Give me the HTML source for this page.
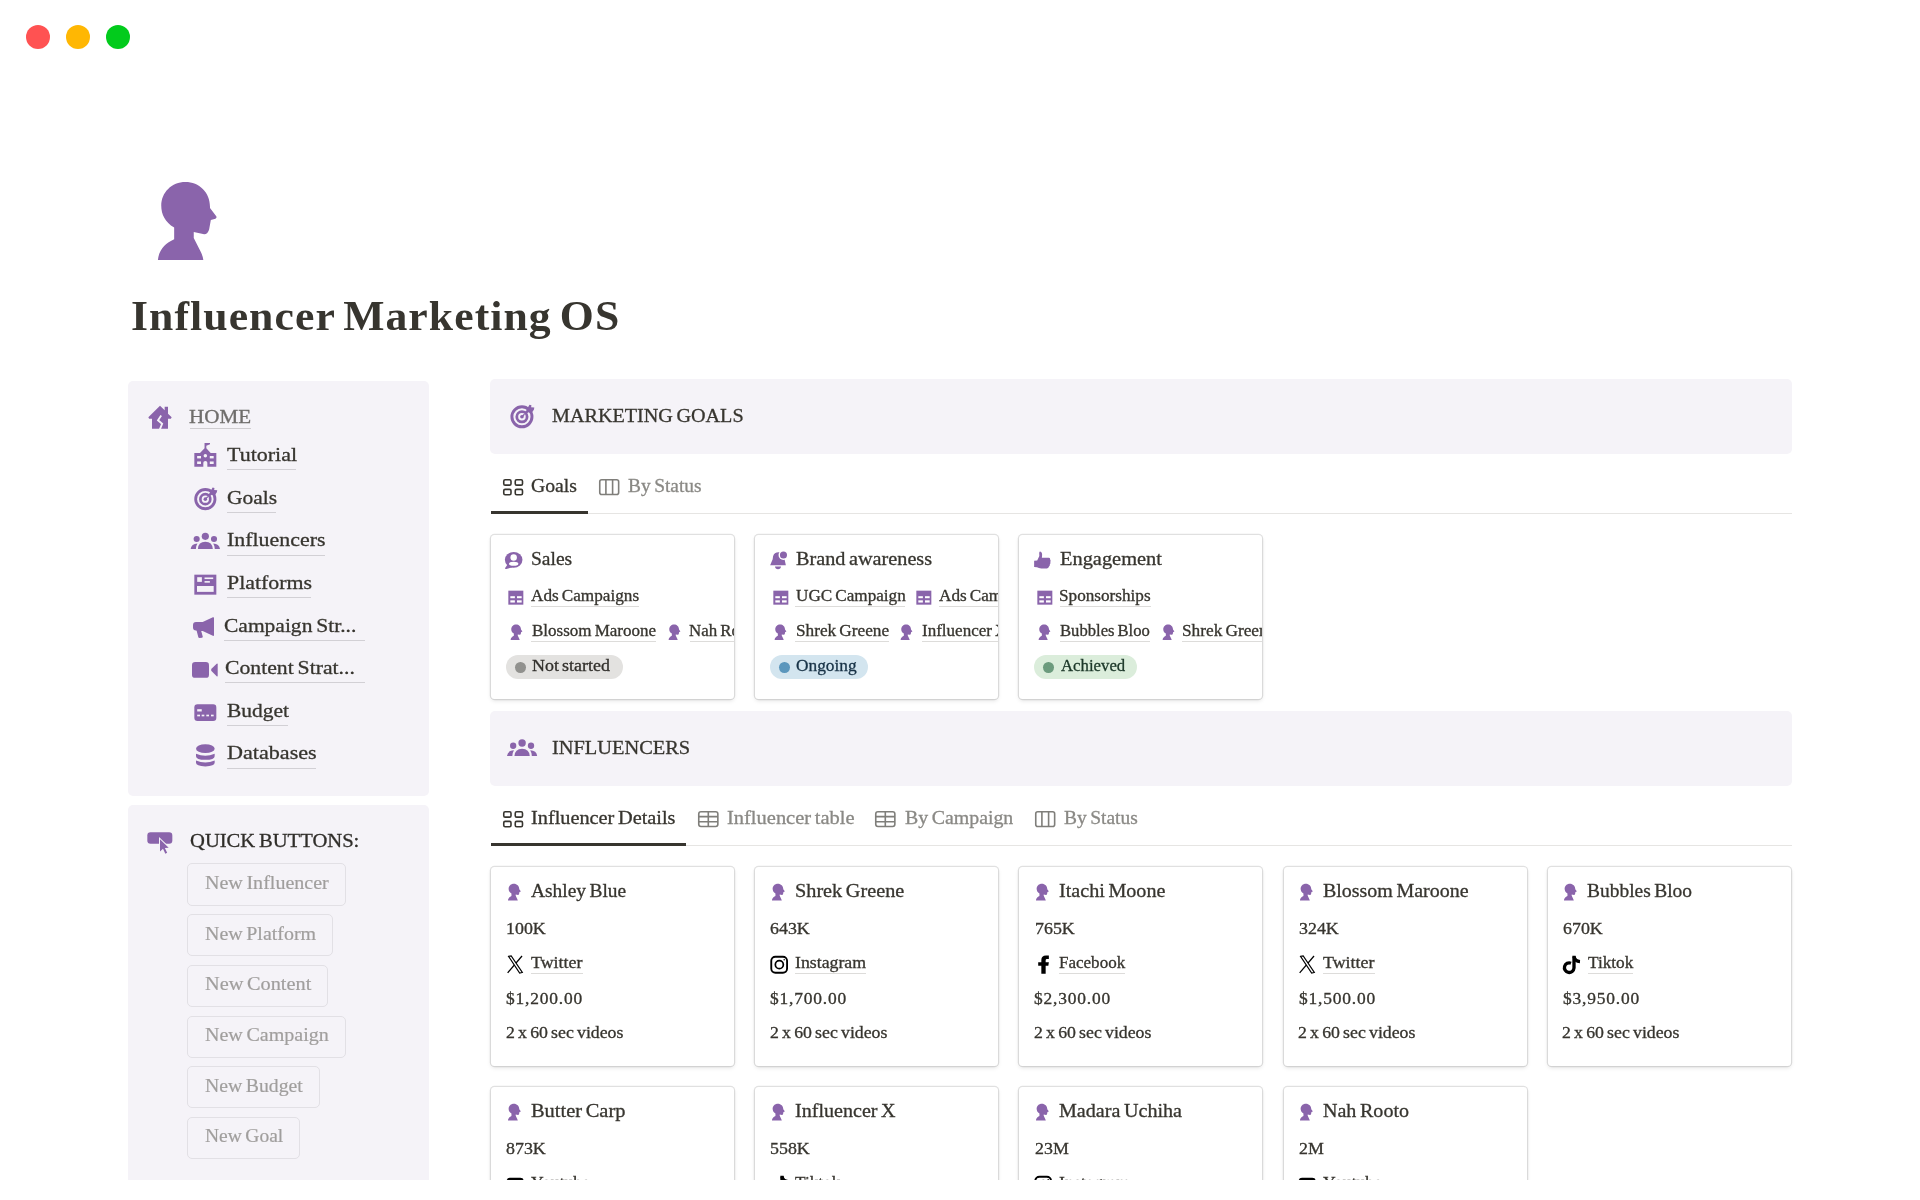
<!DOCTYPE html>
<html lang="en">
<head>
<meta charset="utf-8">
<title>Influencer Marketing OS</title>
<style>
*{box-sizing:border-box;margin:0;padding:0}
html,body{width:1920px;height:1200px;overflow:hidden;background:#fff}
body{font-family:"Liberation Serif",serif;color:#37352f;position:relative}
#view{position:absolute;left:0;top:0;width:1920px;height:1180px;overflow:hidden;will-change:transform}
.abs{position:absolute}
.dot{position:absolute;top:25px;width:24px;height:24px;border-radius:50%}
.t{position:absolute;white-space:nowrap;line-height:1;-webkit-text-stroke:0.3px;transform-origin:0 0;word-spacing:-0.07em}
svg{position:absolute;overflow:visible}
.panel{position:absolute;background:#f5f3f8;border-radius:5px}
.ul{position:absolute;height:1px}
.qb{position:absolute;height:42.2px;border:1px solid #e2e0e5;border-radius:5px}
.card{position:absolute;background:#fff;border-radius:3.5px;box-shadow:0 0 0 1.25px rgba(15,15,15,.12),0 2px 4px rgba(15,15,15,.1);overflow:hidden}
.pill{position:absolute;height:23.6px;border-radius:12px}
.pdot{position:absolute;width:10.8px;height:10.8px;border-radius:50%}
</style>
</head>
<body>

<div id="view">
<div class="dot" style="left:26px;background:#ff5252"></div><div class="dot" style="left:66px;background:#ffb703"></div><div class="dot" style="left:106px;background:#02cb1c"></div>
<svg style="left:140.10px;top:169.90px" width="100" height="100" viewBox="0 0 1200 1200"><path fill="#8a64ab" d="M215 1080C225 960 300 880 410 830L410 690C300 630 255 530 255 430C255 270 380 145 545 145C710 145 840 270 840 440L840 455L915 555Q925 575 905 585L850 600L830 710Q815 770 770 770L645 745L645 815L730 985Q755 1035 760 1080Z"/></svg>
<div class="panel" style="left:128px;top:381px;width:300.5px;height:415.3px"></div>
<div class="panel" style="left:128px;top:805px;width:300.5px;height:400px"></div>
<div class="panel" style="left:490.2px;top:379.0px;width:1301.6px;height:74.5px"></div>
<div class="panel" style="left:490.2px;top:711.2px;width:1301.6px;height:74.8px"></div>
<svg style="left:140.00px;top:396.00px" width="90.00" height="80.00" viewBox="0 0 1350 1200"><path fill="#8a64ab" d="M300 148L125 318L137 340L180 340L180 490L420 490L420 340L463 340L475 318L420 265L420 160L370 160L370 215Z"/><path fill="none" stroke="#f5f3f8" stroke-width="28" stroke-linejoin="miter" d="M318 292L270 365L332 418L298 500"/></svg>
<svg style="left:140.00px;top:396.00px" width="90.00" height="80.00" viewBox="0 0 1350 1200"><path fill="#8a64ab" d="M815 855L900 855L968 782L968 705L1050 705L1050 722L995 748L995 782L1060 855L1145 855L1145 1060L1010 1060L1010 1000Q1010 975 980 975Q950 975 950 1000L950 1060L815 1060Z"/><g fill="#f5f3f8"><rect x="857" y="900" width="58" height="36"/><rect x="1047" y="900" width="58" height="36"/><rect x="857" y="982" width="58" height="38"/><rect x="1047" y="982" width="58" height="38"/><circle cx="980" cy="895" r="26"/></g></svg>
<div class="ul" style="left:190.0px;top:428.0px;width:61.0px;background:#cfcdd0"></div>
<div class="ul" style="left:226.7px;top:469.4px;width:69.8px;background:#d2d0d5"></div>
<div class="ul" style="left:226.7px;top:511.9px;width:49.8px;background:#d2d0d5"></div>
<div class="ul" style="left:226.7px;top:554.5px;width:98.2px;background:#d2d0d5"></div>
<div class="ul" style="left:226.7px;top:597.2px;width:84.8px;background:#d2d0d5"></div>
<div class="ul" style="left:224.1px;top:639.9px;width:140.8px;background:#d2d0d5"></div>
<div class="ul" style="left:225.3px;top:682.4px;width:139.6px;background:#d2d0d5"></div>
<div class="ul" style="left:226.7px;top:725.0px;width:61.8px;background:#d2d0d5"></div>
<div class="ul" style="left:226.7px;top:767.6px;width:89.4px;background:#d2d0d5"></div>
<svg style="left:190.00px;top:483.00px" width="32.00" height="32.00" viewBox="0 0 1200 1200"><circle cx="575" cy="605" r="362" fill="none" stroke="#8a64ab" stroke-width="106"/><circle cx="575" cy="605" r="186" fill="none" stroke="#8a64ab" stroke-width="100"/><circle cx="575" cy="605" r="66" fill="#8a64ab"/><path d="M575 605L655 525" stroke="#8a64ab" stroke-width="46" stroke-linecap="round" fill="none"/><path d="M700 480L850 330" stroke="#8a64ab" stroke-width="96" fill="none"/><path fill="#8a64ab" d="M752 335L848 168L918 186L906 262L1022 274L1006 348L936 448L790 442Z"/></svg>
<svg style="left:180.00px;top:480.00px" width="90.00" height="80.00" viewBox="0 0 1350 1200"><g fill="#8a64ab"><circle cx="380" cy="845" r="54"/><circle cx="250" cy="885" r="46"/><circle cx="510" cy="885" r="46"/><path d="M268 1035Q275 930 380 928Q485 930 492 1035Z"/><path d="M160 1035Q170 955 262 952Q240 985 238 1035Z"/><path d="M600 1035Q590 955 498 952Q520 985 522 1035Z"/></g></svg>
<svg style="left:180.00px;top:560.00px" width="90.00" height="80.00" viewBox="0 0 1350 1200"><rect x="215" y="220" width="330" height="300" fill="#8a64ab"/><g fill="#f5f3f8"><rect x="258" y="258" width="70" height="70"/><rect x="368" y="262" width="130" height="24"/><rect x="368" y="316" width="80" height="24"/><rect x="255" y="390" width="250" height="88"/></g></svg>
<svg style="left:180.00px;top:560.00px" width="90.00" height="80.00" viewBox="0 0 1350 1200"><path fill="#8a64ab" d="M510 870Q510 852 493 860L340 930L240 930Q195 930 195 975L195 1012Q195 1055 240 1058L250 1062L275 1158Q280 1172 295 1170L330 1166Q346 1162 341 1148L318 1065L340 1065L493 1137Q510 1143 510 1125Z"/></svg>
<svg style="left:180.00px;top:640.00px" width="90.00" height="80.00" viewBox="0 0 1350 1200"><rect x="180" y="330" width="255" height="238" rx="48" fill="#8a64ab"/><path fill="#8a64ab" d="M565 362Q565 345 550 355L472 430Q460 448 472 466L550 545Q565 555 565 538Z"/></svg>
<svg style="left:180.00px;top:690.00px" width="90.00" height="80.00" viewBox="0 0 1350 1200"><rect x="215" y="215" width="330" height="250" rx="48" fill="#8a64ab"/><g fill="#f5f3f8"><rect x="258" y="288" width="68" height="34"/><rect x="258" y="370" width="42" height="25"/><rect x="325" y="370" width="40" height="25"/><rect x="395" y="370" width="40" height="25"/><rect x="465" y="370" width="40" height="25"/></g></svg>
<svg style="left:180.00px;top:690.00px" width="90.00" height="80.00" viewBox="0 0 1350 1200"><g fill="#8a64ab"><ellipse cx="380" cy="880" rx="140" ry="66"/><path d="M240 955Q380 1015 520 955L520 992Q520 1045 380 1048Q240 1045 240 992Z"/><path d="M240 1058Q380 1118 520 1058L520 1092Q520 1142 380 1146Q240 1142 240 1092Z"/></g></svg>
<svg style="left:135.00px;top:815.00px" width="120.00" height="80.00" viewBox="0 0 1800 1200"><rect x="185" y="258" width="375" height="174" rx="48" fill="#8a64ab"/><path d="M375 365L375 548L420 508L455 580L482 566L448 495L505 490Z" fill="#8a64ab" stroke="#f5f3f8" stroke-width="30" stroke-linejoin="miter"/><path d="M375 365L375 548L420 508L455 580L482 566L448 495L505 490Z" fill="#8a64ab"/></svg>
<div class="qb" style="left:187.0px;top:863.4px;width:158.8px"></div>
<div class="qb" style="left:187.0px;top:914.1px;width:146.1px"></div>
<div class="qb" style="left:187.0px;top:964.8px;width:141.3px"></div>
<div class="qb" style="left:187.0px;top:1015.5px;width:158.8px"></div>
<div class="qb" style="left:187.0px;top:1066.2px;width:132.8px"></div>
<div class="qb" style="left:187.0px;top:1116.9px;width:113.3px"></div>
<svg style="left:506.25px;top:399.72px" width="33.28" height="33.28" viewBox="0 0 1200 1200"><circle cx="575" cy="605" r="362" fill="none" stroke="#8a64ab" stroke-width="106"/><circle cx="575" cy="605" r="186" fill="none" stroke="#8a64ab" stroke-width="100"/><circle cx="575" cy="605" r="66" fill="#8a64ab"/><path d="M575 605L655 525" stroke="#8a64ab" stroke-width="46" stroke-linecap="round" fill="none"/><path d="M700 480L850 330" stroke="#8a64ab" stroke-width="96" fill="none"/><path fill="#8a64ab" d="M752 335L848 168L918 186L906 262L1022 274L1006 348L936 448L790 442Z"/></svg>
<svg style="left:495.70px;top:684.75px" width="92.70" height="82.40" viewBox="0 0 1350 1200"><g fill="#8a64ab"><circle cx="380" cy="845" r="54"/><circle cx="250" cy="885" r="46"/><circle cx="510" cy="885" r="46"/><path d="M268 1035Q275 930 380 928Q485 930 492 1035Z"/><path d="M160 1035Q170 955 262 952Q240 985 238 1035Z"/><path d="M600 1035Q590 955 498 952Q520 985 522 1035Z"/></g></svg>
<svg style="left:502.5px;top:479.4px" width="21" height="17" viewBox="0 0 21 17"><rect x="0.75" y="0.75" width="7.25" height="5.35" rx="1.4" fill="none" stroke="#37352f" stroke-width="1.6"/><rect x="12.25" y="0.75" width="7.25" height="5.35" rx="1.4" fill="none" stroke="#37352f" stroke-width="1.6"/><rect x="0.75" y="10.35" width="7.25" height="5.35" rx="1.4" fill="none" stroke="#37352f" stroke-width="1.6"/><rect x="12.25" y="10.35" width="7.25" height="5.35" rx="1.4" fill="none" stroke="#37352f" stroke-width="1.6"/></svg>
<svg style="left:599px;top:479.4px" width="21" height="17" viewBox="0 0 21 17"><rect x="0.75" y="0.75" width="18.9" height="14.7" rx="2" fill="none" stroke="#7f7e7a" stroke-width="1.6"/><path d="M6.9 0.75V15.45M13.6 0.75V15.45" stroke="#7f7e7a" stroke-width="1.6"/></svg>
<div class="abs" style="left:491px;top:513px;width:1300.5px;height:1px;background:#e6e5e3"></div>
<div class="abs" style="left:491.2px;top:511.2px;width:96.7px;height:2.8px;background:#37352f"></div>
<svg style="left:502.5px;top:811.4px" width="21" height="17" viewBox="0 0 21 17"><rect x="0.75" y="0.75" width="7.25" height="5.35" rx="1.4" fill="none" stroke="#37352f" stroke-width="1.6"/><rect x="12.25" y="0.75" width="7.25" height="5.35" rx="1.4" fill="none" stroke="#37352f" stroke-width="1.6"/><rect x="0.75" y="10.35" width="7.25" height="5.35" rx="1.4" fill="none" stroke="#37352f" stroke-width="1.6"/><rect x="12.25" y="10.35" width="7.25" height="5.35" rx="1.4" fill="none" stroke="#37352f" stroke-width="1.6"/></svg>
<svg style="left:697.5px;top:811.4px" width="21" height="17" viewBox="0 0 21 17"><rect x="0.75" y="0.75" width="19.1" height="14.7" rx="2.2" fill="none" stroke="#7f7e7a" stroke-width="1.6"/><path d="M10.3 0.75V15.45M0.75 5.6H19.85M0.75 10.8H19.85" stroke="#7f7e7a" stroke-width="1.6"/></svg>
<svg style="left:875.3px;top:811.4px" width="21" height="17" viewBox="0 0 21 17"><rect x="0.75" y="0.75" width="19.1" height="14.7" rx="2.2" fill="none" stroke="#7f7e7a" stroke-width="1.6"/><path d="M10.3 0.75V15.45M0.75 5.6H19.85M0.75 10.8H19.85" stroke="#7f7e7a" stroke-width="1.6"/></svg>
<svg style="left:1035px;top:811.4px" width="21" height="17" viewBox="0 0 21 17"><rect x="0.75" y="0.75" width="18.9" height="14.7" rx="2" fill="none" stroke="#7f7e7a" stroke-width="1.6"/><path d="M6.9 0.75V15.45M13.6 0.75V15.45" stroke="#7f7e7a" stroke-width="1.6"/></svg>
<div class="abs" style="left:491px;top:845px;width:1300.5px;height:1px;background:#e6e5e3"></div>
<div class="abs" style="left:491.2px;top:843.2px;width:194.8px;height:2.8px;background:#37352f"></div>
<div class="t" style="left:130.74px;top:296.00px;font-size:41.86px;letter-spacing:1.029px;transform:scaleX(1.0436);-webkit-text-stroke:0px;word-spacing:-0.09em;font-weight:700">Influencer Marketing OS</div>
<div class="t" style="left:189.41px;top:407.00px;font-size:19.7px;transform:scaleX(1.0705);color:#6f6d6b">HOME</div>
<div class="t" style="left:226.61px;top:445.00px;font-size:19.7px;transform:scaleX(1.1174)">Tutorial</div>
<div class="t" style="left:226.61px;top:488.00px;font-size:19.7px;transform:scaleX(1.0900)">Goals</div>
<div class="t" style="left:226.61px;top:530.00px;font-size:19.7px;transform:scaleX(1.1124)">Influencers</div>
<div class="t" style="left:226.61px;top:573.00px;font-size:19.7px;transform:scaleX(1.1114)">Platforms</div>
<div class="t" style="left:224.01px;top:616.00px;font-size:19.7px;transform:scaleX(1.0921)">Campaign Str...</div>
<div class="t" style="left:225.21px;top:658.00px;font-size:19.7px;transform:scaleX(1.1022)">Content Strat...</div>
<div class="t" style="left:226.61px;top:701.00px;font-size:19.7px;transform:scaleX(1.0914)">Budget</div>
<div class="t" style="left:226.61px;top:743.00px;font-size:19.7px;transform:scaleX(1.1240)">Databases</div>
<div class="t" style="left:189.71px;top:831.00px;font-size:19.7px;transform:scaleX(1.0466);color:#2f2d29">QUICK BUTTONS:</div>
<div class="t" style="left:205.24px;top:874.00px;font-size:18.71px;transform:scaleX(1.0725);-webkit-text-stroke:0.2px;color:#a09e9d">New Influencer</div>
<div class="t" style="left:205.24px;top:925.00px;font-size:18.71px;transform:scaleX(1.0678);-webkit-text-stroke:0.2px;color:#a09e9d">New Platform</div>
<div class="t" style="left:205.24px;top:975.00px;font-size:18.71px;transform:scaleX(1.0868);-webkit-text-stroke:0.2px;color:#a09e9d">New Content</div>
<div class="t" style="left:205.24px;top:1026.00px;font-size:18.71px;transform:scaleX(1.0722);-webkit-text-stroke:0.2px;color:#a09e9d">New Campaign</div>
<div class="t" style="left:205.24px;top:1077.00px;font-size:18.71px;transform:scaleX(1.0556);-webkit-text-stroke:0.2px;color:#a09e9d">New Budget</div>
<div class="t" style="left:205.24px;top:1127.00px;font-size:18.71px;transform:scaleX(1.0439);-webkit-text-stroke:0.2px;color:#a09e9d">New Goal</div>
<div class="t" style="left:552.01px;top:406.00px;font-size:19.7px;transform:scaleX(1.0230)">MARKETING GOALS</div>
<div class="t" style="left:552.01px;top:738.00px;font-size:19.7px;transform:scaleX(1.0357)">INFLUENCERS</div>
<div class="t" style="left:531.34px;top:477.00px;font-size:18.71px;transform:scaleX(1.0545)">Goals</div>
<div class="t" style="left:628.44px;top:477.00px;font-size:18.71px;transform:scaleX(1.0383);color:#8a8985">By Status</div>
<div class="t" style="left:531.34px;top:809.00px;font-size:18.71px;transform:scaleX(1.0859)">Influencer Details</div>
<div class="t" style="left:726.64px;top:809.00px;font-size:18.71px;transform:scaleX(1.0954);color:#8a8985">Influencer table</div>
<div class="t" style="left:904.64px;top:809.00px;font-size:18.71px;transform:scaleX(1.0619);color:#8a8985">By Campaign</div>
<div class="t" style="left:1063.94px;top:809.00px;font-size:18.71px;transform:scaleX(1.0411);color:#8a8985">By Status</div>
<div class="card" style="left:491.0px;top:535.0px;width:243px;height:164px">
<svg style="left:4.00px;top:5.00px" width="120.00" height="80.00" viewBox="0 0 1800 1200"><ellipse cx="280" cy="298" rx="132" ry="118" fill="#8a64ab"/><path fill="#8a64ab" d="M185 370L150 425Q150 440 170 436L260 410Z"/><circle cx="280" cy="262" r="48" fill="#fff"/><ellipse cx="280" cy="355" rx="70" ry="30" fill="#fff"/></svg>
<svg style="left:4.00px;top:5.00px" width="120.00" height="80.00" viewBox="0 0 1800 1200"><rect x="200" y="760" width="225" height="210" fill="#8a64ab"/><g fill="#fff"><rect x="230" y="843" width="68" height="30"/><rect x="330" y="843" width="70" height="30"/><rect x="230" y="905" width="68" height="33"/><rect x="330" y="905" width="70" height="33"/></g></svg>
<div class="ul" style="left:40.00px;top:71.30px;width:108.0px;background:#dddcda"></div>
<svg style="left:16.02px;top:86.98px" width="20" height="20" viewBox="0 0 1200 1200"><path fill="#8a64ab" d="M215 1080C225 960 300 880 410 830L410 690C300 630 255 530 255 430C255 270 380 145 545 145C710 145 840 270 840 440L840 455L915 555Q925 575 905 585L850 600L830 710Q815 770 770 770L645 745L645 815L730 985Q755 1035 760 1080Z"/></svg>
<div class="ul" style="left:40.00px;top:106.20px;width:125.0px;background:#dddcda"></div>
<svg style="left:174.22px;top:86.98px" width="20" height="20" viewBox="0 0 1200 1200"><path fill="#8a64ab" d="M215 1080C225 960 300 880 410 830L410 690C300 630 255 530 255 430C255 270 380 145 545 145C710 145 840 270 840 440L840 455L915 555Q925 575 905 585L850 600L830 710Q815 770 770 770L645 745L645 815L730 985Q755 1035 760 1080Z"/></svg>
<div class="ul" style="left:198.50px;top:106.20px;width:70.5px;background:#dddcda"></div>
<div class="pill" style="left:15.00px;top:120.40px;width:116.6px;background:#e3e2e0"></div><div class="pdot" style="left:24.30px;top:126.90px;background:#91918e"></div>
<div class="t" style="left:39.94px;top:15.00px;font-size:18.71px;transform:scaleX(1.0437)">Sales</div>
<div class="t" style="left:40.03px;top:53.00px;font-size:15.76px;transform:scaleX(1.0910)">Ads Campaigns</div>
<div class="t" style="left:40.63px;top:88.00px;font-size:15.76px;transform:scaleX(1.0811)">Blossom Maroone</div>
<div class="t" style="left:198.43px;top:88.00px;font-size:15.76px;transform:scaleX(1.0718)">Nah Rooto</div>
<div class="t" style="left:41.31px;top:123.00px;font-size:16.25px;transform:scaleX(1.1030);color:#32302c">Not started</div>
</div>
<div class="card" style="left:755.0px;top:535.0px;width:243px;height:164px">
<svg style="left:5.00px;top:5.00px" width="120.00" height="80.00" viewBox="0 0 1800 1200"><path fill="#8a64ab" d="M152 378L190 290L196 245Q212 183 280 183Q345 183 362 245L368 290L388 378Z"/><path fill="#8a64ab" d="M225 398L315 398Q310 438 270 438Q230 438 225 398Z"/><circle cx="352" cy="225" r="74" fill="#fff"/><circle cx="352" cy="225" r="53" fill="#8a64ab"/></svg>
<svg style="left:5.00px;top:5.00px" width="120.00" height="80.00" viewBox="0 0 1800 1200"><rect x="200" y="760" width="225" height="210" fill="#8a64ab"/><g fill="#fff"><rect x="230" y="843" width="68" height="30"/><rect x="330" y="843" width="70" height="30"/><rect x="230" y="905" width="68" height="33"/><rect x="330" y="905" width="70" height="33"/></g></svg>
<div class="ul" style="left:40.30px;top:71.30px;width:110.2px;background:#dddcda"></div>
<svg style="left:148.20px;top:5.00px" width="120.00" height="80.00" viewBox="0 0 1800 1200"><rect x="200" y="760" width="225" height="210" fill="#8a64ab"/><g fill="#fff"><rect x="230" y="843" width="68" height="30"/><rect x="330" y="843" width="70" height="30"/><rect x="230" y="905" width="68" height="33"/><rect x="330" y="905" width="70" height="33"/></g></svg>
<div class="ul" style="left:184.00px;top:71.30px;width:111.0px;background:#dddcda"></div>
<svg style="left:16.02px;top:86.98px" width="20" height="20" viewBox="0 0 1200 1200"><path fill="#8a64ab" d="M215 1080C225 960 300 880 410 830L410 690C300 630 255 530 255 430C255 270 380 145 545 145C710 145 840 270 840 440L840 455L915 555Q925 575 905 585L850 600L830 710Q815 770 770 770L645 745L645 815L730 985Q755 1035 760 1080Z"/></svg>
<div class="ul" style="left:40.30px;top:106.20px;width:93.7px;background:#dddcda"></div>
<svg style="left:142.42px;top:86.98px" width="20" height="20" viewBox="0 0 1200 1200"><path fill="#8a64ab" d="M215 1080C225 960 300 880 410 830L410 690C300 630 255 530 255 430C255 270 380 145 545 145C710 145 840 270 840 440L840 455L915 555Q925 575 905 585L850 600L830 710Q815 770 770 770L645 745L645 815L730 985Q755 1035 760 1080Z"/></svg>
<div class="ul" style="left:167.00px;top:106.20px;width:88.0px;background:#dddcda"></div>
<div class="pill" style="left:15.40px;top:120.40px;width:98px;background:#d3e5ef"></div><div class="pdot" style="left:24.30px;top:126.90px;background:#5b97bd"></div>
<div class="t" style="left:40.74px;top:15.00px;font-size:18.71px;transform:scaleX(1.0817)">Brand awareness</div>
<div class="t" style="left:40.83px;top:53.00px;font-size:15.76px;transform:scaleX(1.0886)">UGC Campaign</div>
<div class="t" style="left:183.83px;top:53.00px;font-size:15.76px;transform:scaleX(1.0910)">Ads Campaigns</div>
<div class="t" style="left:40.73px;top:88.00px;font-size:15.76px;transform:scaleX(1.0954)">Shrek Greene</div>
<div class="t" style="left:167.03px;top:88.00px;font-size:15.76px;transform:scaleX(1.0815)">Influencer X</div>
<div class="t" style="left:41.41px;top:123.00px;font-size:16.25px;transform:scaleX(1.0667);color:#183347">Ongoing</div>
</div>
<div class="card" style="left:1019.0px;top:535.0px;width:243px;height:164px">
<svg style="left:5.00px;top:5.00px" width="120.00" height="80.00" viewBox="0 0 1800 1200"><path fill="#8a64ab" d="M152 312L198 306L230 240L228 195Q230 170 250 175Q273 182 272 222L268 265L375 268Q396 272 392 292Q406 310 395 330Q403 350 388 365Q392 385 375 396Q370 422 345 426L260 426Q220 425 195 408L152 405Z"/></svg>
<svg style="left:5.00px;top:5.00px" width="120.00" height="80.00" viewBox="0 0 1800 1200"><rect x="200" y="760" width="225" height="210" fill="#8a64ab"/><g fill="#fff"><rect x="230" y="843" width="68" height="30"/><rect x="330" y="843" width="70" height="30"/><rect x="230" y="905" width="68" height="33"/><rect x="330" y="905" width="70" height="33"/></g></svg>
<div class="ul" style="left:40.50px;top:71.30px;width:91.5px;background:#dddcda"></div>
<svg style="left:16.02px;top:86.98px" width="20" height="20" viewBox="0 0 1200 1200"><path fill="#8a64ab" d="M215 1080C225 960 300 880 410 830L410 690C300 630 255 530 255 430C255 270 380 145 545 145C710 145 840 270 840 440L840 455L915 555Q925 575 905 585L850 600L830 710Q815 770 770 770L645 745L645 815L730 985Q755 1035 760 1080Z"/></svg>
<div class="ul" style="left:40.50px;top:106.20px;width:90.0px;background:#dddcda"></div>
<svg style="left:139.62px;top:86.98px" width="20" height="20" viewBox="0 0 1200 1200"><path fill="#8a64ab" d="M215 1080C225 960 300 880 410 830L410 690C300 630 255 530 255 430C255 270 380 145 545 145C710 145 840 270 840 440L840 455L915 555Q925 575 905 585L850 600L830 710Q815 770 770 770L645 745L645 815L730 985Q755 1035 760 1080Z"/></svg>
<div class="ul" style="left:163.00px;top:106.20px;width:98.0px;background:#dddcda"></div>
<div class="pill" style="left:15.30px;top:120.40px;width:103px;background:#dbeddb"></div><div class="pdot" style="left:24.20px;top:126.90px;background:#6c9b7d"></div>
<div class="t" style="left:41.44px;top:15.00px;font-size:18.71px;transform:scaleX(1.0912)">Engagement</div>
<div class="t" style="left:40.13px;top:53.00px;font-size:15.76px;transform:scaleX(1.0908)">Sponsorships</div>
<div class="t" style="left:40.53px;top:88.00px;font-size:15.76px;transform:scaleX(1.0557)">Bubbles Bloo</div>
<div class="t" style="left:163.23px;top:88.00px;font-size:15.76px;transform:scaleX(1.0978)">Shrek Greene</div>
<div class="t" style="left:41.71px;top:123.00px;font-size:16.25px;transform:scaleX(1.0317);color:#1c3829">Achieved</div>
</div>
<div class="card" style="left:491.0px;top:867.0px;width:243px;height:199px">
<svg style="left:12.90px;top:14.36px" width="21.8" height="21.8" viewBox="0 0 1200 1200"><path fill="#8a64ab" d="M215 1080C225 960 300 880 410 830L410 690C300 630 255 530 255 430C255 270 380 145 545 145C710 145 840 270 840 440L840 455L915 555Q925 575 905 585L850 600L830 710Q815 770 770 770L645 745L645 815L730 985Q755 1035 760 1080Z"/></svg>
<svg style="left:4.00px;top:73.00px" width="120.00" height="80.00" viewBox="0 0 1800 1200"><path d="M405 240L190 492" stroke="#000" stroke-width="19" fill="none"/><path d="M203 245L243 238L410 487L370 495Z" fill="#fff" stroke="#000" stroke-width="17" stroke-linejoin="miter"/></svg>
<div class="ul" style="left:40.00px;top:106.20px;width:51.5px;background:#dddcda"></div>
<div class="t" style="left:39.74px;top:15.00px;font-size:18.71px;transform:scaleX(1.0389)">Ashley Blue</div>
<div class="t" style="left:15.33px;top:54.00px;font-size:15.76px;transform:scaleX(1.1350)">100K</div>
<div class="t" style="left:40.03px;top:88.00px;font-size:15.76px;transform:scaleX(1.1354)">Twitter</div>
<div class="t" style="left:15.23px;top:124.00px;font-size:15.76px;letter-spacing:0.740px;transform:scaleX(1.1052)">$1,200.00</div>
<div class="t" style="left:14.73px;top:158.00px;font-size:15.76px;transform:scaleX(1.1279)">2 x 60 sec videos</div>
</div>
<div class="card" style="left:755.0px;top:867.0px;width:243px;height:199px">
<svg style="left:13.02px;top:14.36px" width="21.8" height="21.8" viewBox="0 0 1200 1200"><path fill="#8a64ab" d="M215 1080C225 960 300 880 410 830L410 690C300 630 255 530 255 430C255 270 380 145 545 145C710 145 840 270 840 440L840 455L915 555Q925 575 905 585L850 600L830 710Q815 770 770 770L645 745L645 815L730 985Q755 1035 760 1080Z"/></svg>
<svg style="left:4.12px;top:73.00px" width="120.00" height="80.00" viewBox="0 0 1800 1200"><rect x="184" y="251" width="237" height="240" rx="62" fill="none" stroke="#000" stroke-width="28"/><circle cx="305" cy="370" r="60" fill="none" stroke="#000" stroke-width="26"/><circle cx="378" cy="297" r="11" fill="#000"/></svg>
<div class="ul" style="left:40.10px;top:106.20px;width:71.2px;background:#dddcda"></div>
<div class="t" style="left:39.86px;top:15.00px;font-size:18.71px;transform:scaleX(1.0833)">Shrek Greene</div>
<div class="t" style="left:15.45px;top:54.00px;font-size:15.76px;transform:scaleX(1.1350)">643K</div>
<div class="t" style="left:40.15px;top:88.00px;font-size:15.76px;transform:scaleX(1.1287)">Instagram</div>
<div class="t" style="left:15.35px;top:124.00px;font-size:15.76px;letter-spacing:0.740px;transform:scaleX(1.1052)">$1,700.00</div>
<div class="t" style="left:14.85px;top:158.00px;font-size:15.76px;transform:scaleX(1.1279)">2 x 60 sec videos</div>
</div>
<div class="card" style="left:1019.0px;top:867.0px;width:243px;height:199px">
<svg style="left:13.14px;top:14.36px" width="21.8" height="21.8" viewBox="0 0 1200 1200"><path fill="#8a64ab" d="M215 1080C225 960 300 880 410 830L410 690C300 630 255 530 255 430C255 270 380 145 545 145C710 145 840 270 840 440L840 455L915 555Q925 575 905 585L850 600L830 710Q815 770 770 770L645 745L645 815L730 985Q755 1035 760 1080Z"/></svg>
<svg style="left:4.24px;top:73.00px" width="120.00" height="80.00" viewBox="0 0 1800 1200"><path fill="#000" d="M275 508L275 385L228 385L228 335L275 335L275 300Q275 232 345 232L388 232L388 285L360 285Q340 285 340 305L340 335L388 335L380 385L340 385L340 508Z"/></svg>
<div class="ul" style="left:40.20px;top:106.20px;width:66.3px;background:#dddcda"></div>
<div class="t" style="left:39.98px;top:15.00px;font-size:18.71px;transform:scaleX(1.0765)">Itachi Moone</div>
<div class="t" style="left:15.57px;top:54.00px;font-size:15.76px;transform:scaleX(1.1350)">765K</div>
<div class="t" style="left:40.27px;top:88.00px;font-size:15.76px;transform:scaleX(1.0803)">Facebook</div>
<div class="t" style="left:15.47px;top:124.00px;font-size:15.76px;letter-spacing:0.740px;transform:scaleX(1.1052)">$2,300.00</div>
<div class="t" style="left:14.97px;top:158.00px;font-size:15.76px;transform:scaleX(1.1279)">2 x 60 sec videos</div>
</div>
<div class="card" style="left:1284.0px;top:867.0px;width:243px;height:199px">
<svg style="left:12.26px;top:14.36px" width="21.8" height="21.8" viewBox="0 0 1200 1200"><path fill="#8a64ab" d="M215 1080C225 960 300 880 410 830L410 690C300 630 255 530 255 430C255 270 380 145 545 145C710 145 840 270 840 440L840 455L915 555Q925 575 905 585L850 600L830 710Q815 770 770 770L645 745L645 815L730 985Q755 1035 760 1080Z"/></svg>
<svg style="left:3.36px;top:73.00px" width="120.00" height="80.00" viewBox="0 0 1800 1200"><path d="M405 240L190 492" stroke="#000" stroke-width="19" fill="none"/><path d="M203 245L243 238L410 487L370 495Z" fill="#fff" stroke="#000" stroke-width="17" stroke-linejoin="miter"/></svg>
<div class="ul" style="left:39.40px;top:106.20px;width:51.5px;background:#dddcda"></div>
<div class="t" style="left:39.10px;top:15.00px;font-size:18.71px;transform:scaleX(1.0679)">Blossom Maroone</div>
<div class="t" style="left:14.69px;top:54.00px;font-size:15.76px;transform:scaleX(1.1350)">324K</div>
<div class="t" style="left:39.39px;top:88.00px;font-size:15.76px;transform:scaleX(1.1354)">Twitter</div>
<div class="t" style="left:14.59px;top:124.00px;font-size:15.76px;letter-spacing:0.740px;transform:scaleX(1.1052)">$1,500.00</div>
<div class="t" style="left:14.09px;top:158.00px;font-size:15.76px;transform:scaleX(1.1279)">2 x 60 sec videos</div>
</div>
<div class="card" style="left:1548.0px;top:867.0px;width:243px;height:199px">
<svg style="left:12.38px;top:14.36px" width="21.8" height="21.8" viewBox="0 0 1200 1200"><path fill="#8a64ab" d="M215 1080C225 960 300 880 410 830L410 690C300 630 255 530 255 430C255 270 380 145 545 145C710 145 840 270 840 440L840 455L915 555Q925 575 905 585L850 600L830 710Q815 770 770 770L645 745L645 815L730 985Q755 1035 760 1080Z"/></svg>
<svg style="left:3.48px;top:73.00px" width="120.00" height="80.00" viewBox="0 0 1800 1200"><path d="M300 348A72 72 0 1 0 345 420L345 238" fill="none" stroke="#000" stroke-width="50"/><path d="M345 250Q360 320 435 325" fill="none" stroke="#000" stroke-width="50"/></svg>
<div class="ul" style="left:39.50px;top:106.20px;width:45.5px;background:#dddcda"></div>
<div class="t" style="left:39.22px;top:15.00px;font-size:18.71px;transform:scaleX(1.0407)">Bubbles Bloo</div>
<div class="t" style="left:14.81px;top:54.00px;font-size:15.76px;transform:scaleX(1.1350)">670K</div>
<div class="t" style="left:39.51px;top:88.00px;font-size:15.76px;transform:scaleX(1.0943)">Tiktok</div>
<div class="t" style="left:14.71px;top:124.00px;font-size:15.76px;letter-spacing:0.740px;transform:scaleX(1.1052)">$3,950.00</div>
<div class="t" style="left:14.21px;top:158.00px;font-size:15.76px;transform:scaleX(1.1279)">2 x 60 sec videos</div>
</div>
<div class="card" style="left:491.0px;top:1087.0px;width:243px;height:199px">
<svg style="left:12.90px;top:14.36px" width="21.8" height="21.8" viewBox="0 0 1200 1200"><path fill="#8a64ab" d="M215 1080C225 960 300 880 410 830L410 690C300 630 255 530 255 430C255 270 380 145 545 145C710 145 840 270 840 440L840 455L915 555Q925 575 905 585L850 600L830 710Q815 770 770 770L645 745L645 815L730 985Q755 1035 760 1080Z"/></svg>
<svg style="left:4.00px;top:73.00px" width="120.00" height="80.00" viewBox="0 0 1800 1200"><rect x="175" y="265" width="255" height="190" rx="50" fill="#000"/><path d="M272 315L272 405L350 360Z" fill="#fff"/></svg>
<div class="ul" style="left:40.00px;top:106.20px;width:59.0px;background:#dddcda"></div>
<div class="t" style="left:39.74px;top:15.00px;font-size:18.71px;transform:scaleX(1.0928)">Butter Carp</div>
<div class="t" style="left:15.33px;top:54.00px;font-size:15.76px;transform:scaleX(1.1350)">873K</div>
<div class="t" style="left:40.03px;top:88.00px;font-size:15.76px;transform:scaleX(1.1179)">Youtube</div>
</div>
<div class="card" style="left:755.0px;top:1087.0px;width:243px;height:199px">
<svg style="left:13.02px;top:14.36px" width="21.8" height="21.8" viewBox="0 0 1200 1200"><path fill="#8a64ab" d="M215 1080C225 960 300 880 410 830L410 690C300 630 255 530 255 430C255 270 380 145 545 145C710 145 840 270 840 440L840 455L915 555Q925 575 905 585L850 600L830 710Q815 770 770 770L645 745L645 815L730 985Q755 1035 760 1080Z"/></svg>
<svg style="left:4.12px;top:73.00px" width="120.00" height="80.00" viewBox="0 0 1800 1200"><path d="M300 348A72 72 0 1 0 345 420L345 238" fill="none" stroke="#000" stroke-width="50"/><path d="M345 250Q360 320 435 325" fill="none" stroke="#000" stroke-width="50"/></svg>
<div class="ul" style="left:40.10px;top:106.20px;width:45.5px;background:#dddcda"></div>
<div class="t" style="left:39.86px;top:15.00px;font-size:18.71px;transform:scaleX(1.0744)">Influencer X</div>
<div class="t" style="left:15.45px;top:54.00px;font-size:15.76px;transform:scaleX(1.1350)">558K</div>
<div class="t" style="left:40.15px;top:88.00px;font-size:15.76px;transform:scaleX(1.0943)">Tiktok</div>
</div>
<div class="card" style="left:1019.0px;top:1087.0px;width:243px;height:199px">
<svg style="left:13.14px;top:14.36px" width="21.8" height="21.8" viewBox="0 0 1200 1200"><path fill="#8a64ab" d="M215 1080C225 960 300 880 410 830L410 690C300 630 255 530 255 430C255 270 380 145 545 145C710 145 840 270 840 440L840 455L915 555Q925 575 905 585L850 600L830 710Q815 770 770 770L645 745L645 815L730 985Q755 1035 760 1080Z"/></svg>
<svg style="left:4.24px;top:73.00px" width="120.00" height="80.00" viewBox="0 0 1800 1200"><rect x="184" y="251" width="237" height="240" rx="62" fill="none" stroke="#000" stroke-width="28"/><circle cx="305" cy="370" r="60" fill="none" stroke="#000" stroke-width="26"/><circle cx="378" cy="297" r="11" fill="#000"/></svg>
<div class="ul" style="left:40.20px;top:106.20px;width:71.2px;background:#dddcda"></div>
<div class="t" style="left:39.98px;top:15.00px;font-size:18.71px;transform:scaleX(1.0752)">Madara Uchiha</div>
<div class="t" style="left:15.57px;top:54.00px;font-size:15.76px;transform:scaleX(1.1350)">23M</div>
<div class="t" style="left:40.27px;top:88.00px;font-size:15.76px;transform:scaleX(1.1287)">Instagram</div>
</div>
<div class="card" style="left:1284.0px;top:1087.0px;width:243px;height:199px">
<svg style="left:12.26px;top:14.36px" width="21.8" height="21.8" viewBox="0 0 1200 1200"><path fill="#8a64ab" d="M215 1080C225 960 300 880 410 830L410 690C300 630 255 530 255 430C255 270 380 145 545 145C710 145 840 270 840 440L840 455L915 555Q925 575 905 585L850 600L830 710Q815 770 770 770L645 745L645 815L730 985Q755 1035 760 1080Z"/></svg>
<svg style="left:3.36px;top:73.00px" width="120.00" height="80.00" viewBox="0 0 1800 1200"><rect x="175" y="265" width="255" height="190" rx="50" fill="#000"/><path d="M272 315L272 405L350 360Z" fill="#fff"/></svg>
<div class="ul" style="left:39.40px;top:106.20px;width:59.0px;background:#dddcda"></div>
<div class="t" style="left:39.10px;top:15.00px;font-size:18.71px;transform:scaleX(1.0725)">Nah Rooto</div>
<div class="t" style="left:14.69px;top:54.00px;font-size:15.76px;transform:scaleX(1.1350)">2M</div>
<div class="t" style="left:39.39px;top:88.00px;font-size:15.76px;transform:scaleX(1.1179)">Youtube</div>
</div>
</div>
</body>
</html>
